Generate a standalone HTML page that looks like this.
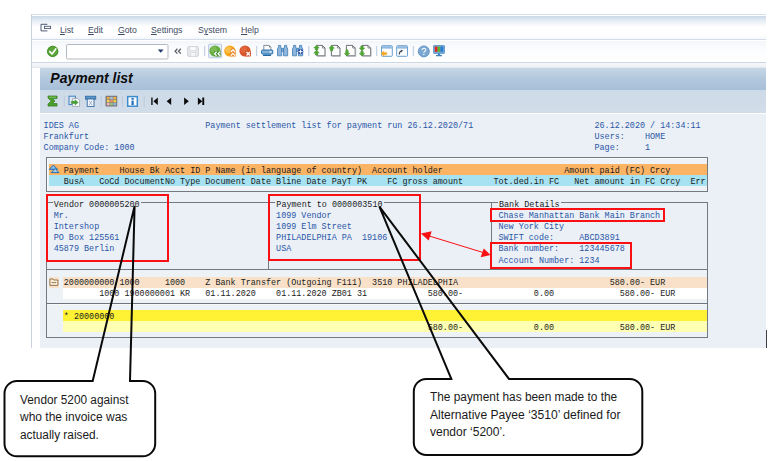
<!DOCTYPE html>
<html>
<head>
<meta charset="utf-8">
<title>Payment list</title>
<style>
html,body{margin:0;padding:0;background:#fff;}
body{width:768px;height:461px;position:relative;overflow:hidden;font-family:"Liberation Sans",sans-serif;}
.a{position:absolute;}
/* window */
#win{left:31px;top:13.5px;width:734px;height:334px;background:#fff;border-left:1px solid #c9d2de;}
#topband{left:32px;top:13.5px;width:734px;height:1.8px;background:#d6e0ec;}
#menubar{left:32px;top:16.3px;width:734px;height:23.2px;background:linear-gradient(#cbd8e8 0%,#e6edf5 20%,#ffffff 48%,#ffffff 80%,#f5f8fb 100%);border-bottom:1px solid #d3dce9;}
#toolbar{left:32px;top:40.5px;width:734px;height:21.3px;background:linear-gradient(#f3f6fa 0%,#fbfcfe 35%,#ffffff 100%);border-bottom:1px solid #cdd7e4;}
#gap{left:32px;top:62.8px;width:734px;height:5.4px;background:linear-gradient(#f6f8fb 0%,#edf1f6 70%,#dde5ee 100%);}
#titlebar{left:40px;top:68.2px;width:726px;height:21.4px;background:linear-gradient(#c6d6e6 0%,#b4c9de 45%,#a7bfd9 100%);}
#apptb{left:40px;top:89.6px;width:726px;height:23.9px;background:linear-gradient(#cddae7,#d1dde9);}
#list{left:40px;top:113.5px;width:726px;height:234px;background:#eaf0f6;}
.menu{top:24.4px;font-size:9.8px;transform:scaleX(0.888);color:#414c64;line-height:12px;white-space:pre;transform-origin:0 50%;}
.menu u{text-decoration:underline;text-underline-offset:1px;}
#title{left:50.3px;top:68.1px;font-size:14px;font-weight:bold;font-style:italic;color:#0c0c0c;line-height:20px;white-space:pre;transform-origin:0 50%;}
/* list rows */
.r{position:absolute;left:43.6px;font-family:"Liberation Mono",monospace;font-size:8.433px;letter-spacing:0.000px;line-height:11.3px;height:11.3px;white-space:pre;}
.r.t{background:#eaf0f6;padding:0 1px;}
.bx{position:absolute;border:1px solid #737980;box-sizing:border-box;}
.red{position:absolute;border:2px solid #fa0f12;box-sizing:border-box;}
.co{position:absolute;font-size:12px;line-height:17.2px;color:#1a1a1a;white-space:pre;transform-origin:0 0;}
</style>
</head>
<body>
<div id="win" class="a"></div>
<div id="topband" class="a"></div>
<div id="menubar" class="a"></div>
<div id="toolbar" class="a"></div>
<div id="gap" class="a"></div>
<div id="titlebar" class="a"></div>
<div id="apptb" class="a"></div>
<div id="list" class="a"></div>

<!-- menu -->
<svg class="a" style="left:39px;top:22px" width="14" height="12" viewBox="39 22 14 12">
  <path d="M47.4 24.3 H41 V30.9 H47.4" fill="none" stroke="#4f5a75" stroke-width="1"/>
  <rect x="44.4" y="26.3" width="6.2" height="2.3" fill="#fff" stroke="#4f5a75" stroke-width="0.9"/>
</svg>
<div class="a menu" id="m1" style="left:59.7px"><u>L</u>ist</div>
<div class="a menu" id="m2" style="left:88px"><u>E</u>dit</div>
<div class="a menu" id="m3" style="left:117.7px"><u>G</u>oto</div>
<div class="a menu" id="m4" style="left:151.4px"><u>S</u>ettings</div>
<div class="a menu" id="m5" style="left:197.5px">S<u>y</u>stem</div>
<div class="a menu" id="m6" style="left:240.5px"><u>H</u>elp</div>

<!-- standard toolbar -->
<svg class="a" style="left:32px;top:40px" width="440" height="23" viewBox="32 40 440 23">
  <!-- enter (green check) -->
  <circle cx="52.7" cy="51.4" r="5.6" fill="#5aa63a"/>
  <circle cx="52.7" cy="51.4" r="5.1" fill="none" stroke="#3f8a2a" stroke-width="0.8"/>
  <path d="M49.8 51.6 L52 54 L55.8 48.9" fill="none" stroke="#fff" stroke-width="1.6" stroke-linecap="round" stroke-linejoin="round"/>
  <!-- command field -->
  <rect x="66.5" y="44.5" width="101.5" height="14.5" rx="1.2" fill="#fff" stroke="#b4b9c0" stroke-width="1"/>
  <path d="M157.8 49.6 H163.6 L160.7 52.8Z" fill="#26396b"/>
  <!-- « -->
  <path d="M177.4 48.8 L175.1 51.2 L177.4 53.6 M180.8 48.8 L178.5 51.2 L180.8 53.6" fill="none" stroke="#585d66" stroke-width="1.25"/>
  <!-- save (disabled) -->
  <rect x="187.7" y="46.5" width="10.6" height="9.8" rx="1" fill="#e9ebee" stroke="#c9ccd1" stroke-width="0.9"/>
  <rect x="189.9" y="46.8" width="6.2" height="3.6" fill="#fbfbfc" stroke="#d0d3d7" stroke-width="0.6"/>
  <rect x="190.3" y="52.4" width="5.4" height="3.8" fill="#f6f7f8" stroke="#d0d3d7" stroke-width="0.6"/>
  <!-- separators -->
  <g stroke="#c4d3e6" stroke-width="1.3">
    <path d="M204.6 46V56 M256.6 46V56 M308.8 46V56 M376.6 46V56 M413.4 46V56"/>
  </g>
  <!-- back (green, framed) -->
  <rect x="208.6" y="44.2" width="13" height="13.6" rx="1" fill="#e6eef8" stroke="#aabedb" stroke-width="0.8"/>
  <circle cx="215" cy="51" r="5.6" fill="#66ad3e"/>
  <circle cx="213.8" cy="49.6" r="3.2" fill="#8cc765" opacity=".55"/>
  <path d="M214 51.2 H220.6 V56.4 H216 Q213.2 55.4 214 51.2Z" fill="#3f8a2c"/>
  <path d="M216.6 51.8 L214.6 53.8 L216.6 55.8 M220 51.8 L218 53.8 L220 55.8" fill="none" stroke="#fff" stroke-width="1.3"/>
  <!-- exit (orange) -->
  <circle cx="229.8" cy="51" r="5.6" fill="#f7a51e"/>
  <circle cx="228.4" cy="49.8" r="3.2" fill="#fdcc5e" opacity=".7"/>
  <path d="M230.2 50.4 L232.9 47.4 L235.7 50.4 V56.6 H230.2Z" fill="#ec8a2c"/>
  <path d="M230.8 52 L232.9 49.8 L235 52 M230.8 55.6 L232.9 53.4 L235 55.6" fill="none" stroke="#fff" stroke-width="1.25"/>
  <!-- cancel (red) -->
  <circle cx="245" cy="51" r="5.6" fill="#d9562c"/>
  <circle cx="243.8" cy="49.8" r="3.2" fill="#e9754a" opacity=".5"/>
  <rect x="245.4" y="51" width="5.6" height="5.6" rx="1" fill="#cc4d25"/>
  <path d="M246.5 52.1 L250 55.6 M250 52.1 L246.5 55.6" fill="none" stroke="#fff" stroke-width="1.4"/>
  <!-- print -->
  <path d="M263.8 50 V45.4 H269 L270.9 47.3 V50" fill="#fdfdfd" stroke="#6b7380" stroke-width="0.8"/>
  <path d="M269 45.4 V47.3 H270.9Z" fill="#59616d"/>
  <rect x="261.6" y="50" width="11.2" height="4" rx="0.8" fill="#82b2da" stroke="#1f6aa5" stroke-width="0.9"/>
  <rect x="269.6" y="51.2" width="1.8" height="1.4" fill="#fff"/>
  <rect x="263" y="54.5" width="8" height="1.5" fill="#1f6aa5"/>
  <!-- find -->
  <g fill="#8fb5da" stroke="#3c7db6" stroke-width="0.8" stroke-linejoin="round">
    <path d="M278.5 45.4 H280.70000000000005 V47 L281.70000000000005 49 V55.8 H277.5 V49 L278.5 47Z"/>
    <path d="M284.5 45.4 H286.70000000000005 V47 L287.70000000000005 49 V55.8 H283.5 V49 L284.5 47Z"/>
    <rect x="281.70000000000005" y="48.4" width="1.8" height="3"/>
  </g>
  <!-- find next -->
  <g fill="#8fb5da" stroke="#3c7db6" stroke-width="0.8" stroke-linejoin="round">
    <path d="M293.5 45.4 H295.70000000000005 V47 L296.70000000000005 49 V55.8 H292.5 V49 L293.5 47Z"/>
    <path d="M299.5 45.4 H301.70000000000005 V47 L302.70000000000005 49 V55.8 H298.5 V49 L299.5 47Z"/>
    <rect x="296.70000000000005" y="48.4" width="1.8" height="3"/>
  </g>
  <circle cx="300.6" cy="51.6" r="2.6" fill="#2b4fa2"/>
  <path d="M298.6 51.6 H302.6 M300.6 49.6 V53.6" stroke="#fff" stroke-width="1"/>
  <!-- page icons -->
  <path d="M316.8 45.4 H322.4 L325.0 48.0 V55.8 H316.8Z" fill="#fdfdfd" stroke="#5d6168" stroke-width="0.9" stroke-linejoin="round"/><path d="M322.4 45.4 V48.0 H325.0" fill="none" stroke="#5d6168" stroke-width="0.7"/><path d="M317.40000000000003 56.4 H325.5 V48.6" fill="none" stroke="#a9adb3" stroke-width="0.7"/>
  <path d="M316.5 45.2 L319.3 47.9 H317.8 V49.9 H315.2 V47.9 H313.7Z" fill="#4fa831" stroke="#3a8a26" stroke-width="0.4" stroke-linejoin="round"/>
  <path d="M316.5 50.2 L319.3 52.9 H317.8 V54.9 H315.2 V52.9 H313.7Z" fill="#4fa831" stroke="#3a8a26" stroke-width="0.4" stroke-linejoin="round"/>
  <path d="M331.4 45.4 H337.4 L340.0 48.0 V55.8 H331.4Z" fill="#fdfdfd" stroke="#5d6168" stroke-width="0.9" stroke-linejoin="round"/><path d="M337.4 45.4 V48.0 H340.0" fill="none" stroke="#5d6168" stroke-width="0.7"/><path d="M332.0 56.4 H340.5 V48.6" fill="none" stroke="#a9adb3" stroke-width="0.7"/>
  <path d="M331.7 45.5 L334.5 48.2 H333.0 V50.2 H330.4 V48.2 H328.9Z" fill="#4fa831" stroke="#3a8a26" stroke-width="0.4" stroke-linejoin="round"/><rect x="330.4" y="49" width="2.6" height="2.2" fill="#4fa831"/>
  <path d="M346.4 45.4 H352.6 L355.2 48.0 V55.8 H346.4Z" fill="#fdfdfd" stroke="#5d6168" stroke-width="0.9" stroke-linejoin="round"/><path d="M352.6 45.4 V48.0 H355.2" fill="none" stroke="#5d6168" stroke-width="0.7"/><path d="M347.0 56.4 H355.7 V48.6" fill="none" stroke="#a9adb3" stroke-width="0.7"/>
  <path d="M347.0 56.1 L349.8 53.4 H348.3 V51.4 H345.7 V53.4 H344.2Z" fill="#4fa831" stroke="#3a8a26" stroke-width="0.4" stroke-linejoin="round"/><rect x="345.7" y="49.6" width="2.6" height="2.2" fill="#4fa831"/>
  <path d="M362.0 45.4 H368.0 L370.6 48.0 V55.8 H362.0Z" fill="#fdfdfd" stroke="#5d6168" stroke-width="0.9" stroke-linejoin="round"/><path d="M368.0 45.4 V48.0 H370.6" fill="none" stroke="#5d6168" stroke-width="0.7"/><path d="M362.6 56.4 H371.1 V48.6" fill="none" stroke="#a9adb3" stroke-width="0.7"/>
  <path d="M362.0 50.8 L364.8 48.1 H363.3 V46.1 H360.7 V48.1 H359.2Z" fill="#4fa831" stroke="#3a8a26" stroke-width="0.4" stroke-linejoin="round"/>
  <path d="M362.0 56.1 L364.8 53.4 H363.3 V51.4 H360.7 V53.4 H359.2Z" fill="#4fa831" stroke="#3a8a26" stroke-width="0.4" stroke-linejoin="round"/>
  <!-- window icons -->
  <rect x="381.5" y="45.7" width="10.8" height="10.6" rx="0.8" fill="#fbfdff" stroke="#6a9fce" stroke-width="1"/>
  <rect x="382" y="46.2" width="9.8" height="2.4" fill="#8fb8de"/>
  <path d="M381 53.6 L383.6 51.2 L384 52.4 H386.8 V54.8 H384 L383.6 56Z" fill="#f7a21b" stroke="#f9b84a" stroke-width="0.6" stroke-linejoin="round"/>
  <rect x="396.7" y="45.7" width="10.8" height="10.6" rx="0.8" fill="#fbfdff" stroke="#6a9fce" stroke-width="1"/>
  <rect x="397.2" y="46.2" width="9.8" height="2.4" fill="#8fb8de"/>
  <path d="M399.3 54.4 Q399.3 51.2 401.8 51" fill="none" stroke="#3e4450" stroke-width="1.1"/>
  <path d="M400.8 49.7 L403 50.6 L401.2 52.4Z" fill="#3e4450"/>
  <!-- help -->
  <circle cx="423.8" cy="51.4" r="5.5" fill="#7ba8d1" stroke="#5c92c4" stroke-width="0.9"/>
  <path d="M421.9 50 Q422 48.3 423.9 48.3 Q425.7 48.4 425.7 49.8 Q425.7 50.8 424.6 51.4 Q423.8 51.9 423.8 52.8" fill="none" stroke="#eef4fa" stroke-width="1.15"/>
  <circle cx="423.8" cy="54.5" r="0.75" fill="#eef4fa"/>
  <!-- monitor -->
  <rect x="433.5" y="45.5" width="11" height="7.9" rx="0.6" fill="#74a9d8" stroke="#5591c8" stroke-width="0.8"/>
  <rect x="434.8" y="46.6" width="2.8" height="5.2" fill="#e3261f"/>
  <rect x="437.6" y="46.6" width="2.8" height="5.2" fill="#5bb52e"/>
  <rect x="440.4" y="46.6" width="2.8" height="5.2" fill="#2c7ad6"/>
  <path d="M437.9 53.6 H440.1 V55 H442 V56.3 H436 V55 H437.9Z" fill="#3f82c0"/>
</svg>

<div id="title" class="a">Payment list</div>

<!-- application toolbar -->
<svg class="a" style="left:40px;top:89px" width="180" height="25" viewBox="40 89 180 25">
  <!-- sigma -->
  <path d="M48 96 H57 V98.6 H52.4 L55 101 L52.4 103.5 H57 V106.1 H48 V104 L51.2 101 L48 98Z" fill="#4aa02c" stroke="#2f7a1d" stroke-width="0.7" stroke-linejoin="round"/>
  <path d="M49.2 97.2 H55.8" stroke="#8fd070" stroke-width="0.8"/>
  <g stroke="#bccbdc" stroke-width="1"><path d="M64.3 96V107 M101.2 96V107 M122.5 96V107 M144.2 96V107"/></g>
  <!-- icon 2 -->
  <rect x="69" y="96.2" width="6.4" height="8.4" fill="#dfeaf6" stroke="#3f7fbb" stroke-width="1"/>
  <path d="M72.6 98.4 H77.4 L79.6 100.6 V106.4 H72.6Z" fill="#fdfdfd" stroke="#8b949f" stroke-width="0.7"/>
  <path d="M71.4 101.3 H75 V99.7 L78.2 102.4 L75 105.1 V103.5 H71.4Z" fill="#44a236" stroke="#2f7d24" stroke-width="0.4"/>
  <!-- icon 3 -->
  <rect x="85.4" y="96.2" width="10.4" height="3" fill="#5c97cc" stroke="#2f68a0" stroke-width="0.8"/>
  <rect x="87.2" y="99" width="6.8" height="7.4" fill="#f4f8fc" stroke="#2f68a0" stroke-width="0.9"/>
  <path d="M89.2 100.8 L92 105 M92 100.8 L89.2 105" stroke="#8ea1bd" stroke-width="0.8"/>
  <!-- grid -->
  <rect x="105.9" y="96.1" width="11" height="10" fill="#878380" stroke="#6d6a68" stroke-width="0.6"/>
  <g>
    <rect x="106.9" y="97" width="2.6" height="2.3" fill="#f5ab3e"/><rect x="110.2" y="97" width="2.6" height="2.3" fill="#a9c3e6"/><rect x="113.5" y="97" width="2.6" height="2.3" fill="#f7b53c"/>
    <rect x="106.9" y="100" width="2.6" height="2.3" fill="#f7d64e"/><rect x="110.2" y="100" width="2.6" height="2.3" fill="#ee8a6a"/><rect x="113.5" y="100" width="2.6" height="2.3" fill="#f3cf3d"/>
    <rect x="106.9" y="103" width="2.6" height="2.3" fill="#f2b4c2"/><rect x="110.2" y="103" width="2.6" height="2.3" fill="#94cc74"/><rect x="113.5" y="103" width="2.6" height="2.3" fill="#88b4ea"/>
  </g>
  <!-- info -->
  <rect x="127.7" y="96.6" width="9.6" height="9.6" fill="#fdfeff" stroke="#3c8dd0" stroke-width="1.5"/>
  <rect x="131.5" y="100.6" width="2.2" height="4.4" fill="#1f6dbd"/>
  <rect x="131.5" y="98" width="2.2" height="1.8" fill="#1f6dbd"/>
  <!-- nav arrows -->
  <g fill="#0b0b0b">
    <rect x="151" y="97.5" width="1.8" height="7.5" fill="#3c3f44"/>
    <path d="M157.8 97.5 V105 L153.4 101.25Z"/>
    <path d="M171.2 97.7 V104.9 L166.6 101.3Z"/>
    <path d="M184.1 97.5 V105 L188.8 101.25Z"/>
    <path d="M197.9 97.5 V105 L202.3 101.25Z"/>
    <rect x="202.3" y="97.5" width="1.9" height="7.5"/>
  </g>
</svg>

<!-- list content -->
<!-- header box -->
<div class="bx" style="left:45.9px;top:157.2px;width:662.2px;height:34.4px;background:#eef2f7;border-bottom-width:1.4px;box-shadow:inset 1px 1px 0 #fbfcfe;"></div>
<div class="a" style="left:48.7px;top:164.1px;width:658px;height:10.9px;background:#fbb364;"></div>
<div class="a" style="left:48.7px;top:175px;width:658px;height:11.1px;background:#a6e2f2;"></div>
<svg class="a" style="left:44px;top:160px" width="24" height="18" viewBox="44 160 24 18">
  <path d="M53.4 165.1 L57.5 169.3 H49.4Z" fill="#8fbce6" stroke="#1d6cb3" stroke-width="1" stroke-linejoin="round"/>
  <path d="M55.2 168.5 L58.9 172.6 H51.2Z" fill="#a9cdee" stroke="#1d6cb3" stroke-width="1" stroke-linejoin="round"/>
</svg>

<!-- frames -->
<div class="bx" style="left:45.9px;top:201.7px;width:223px;height:68px;border-bottom:none;border-right:none"></div>
<div class="bx" style="left:268px;top:201.7px;width:224px;height:68px;border-bottom:none;border-right:none"></div>
<div class="bx" style="left:490.6px;top:201.7px;width:217.5px;height:68px;border-bottom:none"></div>
<!-- body box -->
<div class="bx" style="left:45.9px;top:268.9px;width:662.2px;height:69px;border-bottom-width:1.4px;background:#edf2f7;"></div>
<div class="a" style="left:45.9px;top:302.9px;width:662.2px;height:1px;background:#6f757d;"></div>
<div class="a" style="left:46.9px;top:303.9px;width:660.2px;height:1px;background:#f6f8fb;"></div>
<div class="a" style="left:48.8px;top:277.1px;width:10.1px;height:10.6px;background:#f8e1c8;"></div>
<div class="a" style="left:63.1px;top:277.1px;width:643.6px;height:10.7px;background:#f8e1c8;"></div>
<div class="a" style="left:63.1px;top:287.8px;width:643.6px;height:11px;background:#ffffff;"></div>
<div class="a" style="left:63.1px;top:310.2px;width:643.6px;height:10.8px;background:#fff234;"></div>
<div class="a" style="left:63.1px;top:321px;width:643.6px;height:11.4px;background:#ffffb4;"></div>
<svg class="a" style="left:49px;top:277px" width="10" height="10" viewBox="0 0 10 10">
  <path d="M0.9 2 H3.8 L4.6 3 H8.9 V8.4 H0.9Z" fill="#fbeeda" stroke="#7a5a30" stroke-width="0.8"/>
  <path d="M2.6 5.6 H7.2" stroke="#7a5a30" stroke-width="0.8"/>
</svg>

<div class="r" style="top:121.35px;color:#2b56a6">IDES AG                         Payment settlement list for payment run 26.12.2020/71                        26.12.2020 / 14:34:11</div>
<div class="r" style="top:132.35px;color:#2b56a6">Frankfurt                                                                                                    Users:    HOME</div>
<div class="r" style="top:143.35px;color:#2b56a6">Company Code: 1000                                                                                           Page:     1</div>
<div class="r" style="top:166.35px;color:#1c1c1c">    Payment    House Bk Acct ID P Name (in language of country)  Account holder                        Amount paid (FC) Crcy</div>
<div class="r" style="top:177.35px;color:#1c1c1c">    BusA   CoCd DocumentNo Type Document Date Bline Date PayT PK    FC gross amount      Tot.ded.in FC   Net amount in FC Crcy  Err</div>
<div class="r" style="top:211.35px;color:#2b56a6">  Mr.                                         1099 Vendor                                 Chase Manhattan Bank Main Branch</div>
<div class="r" style="top:222.35px;color:#2b56a6">  Intershop                                   1099 Elm Street                             New York City</div>
<div class="r" style="top:233.35px;color:#2b56a6">  PO Box 125561                               PHILADELPHIA PA  19106                      SWIFT code:     ABCD3891</div>
<div class="r" style="top:244.35px;color:#2b56a6">  45879 Berlin                                USA                                         Bank number:    123445678</div>
<div class="r" style="top:256.35px;color:#2b56a6">                                                                                          Account Number: 1234</div>
<div class="r" style="top:278.35px;color:#1c1c1c">    2000000000 1000     1000    Z Bank Transfer (Outgoing F111)  3510 PHILADELPHIA                              580.00- EUR</div>
<div class="r" style="top:289.35px;color:#1c1c1c">           1000 1900000001 KR   01.11.2020    01.11.2020 ZB01 31            580.00-              0.00             580.00- EUR</div>
<div class="r" style="top:312.35px;color:#1c1c1c">    * 20000000</div>
<div class="r" style="top:323.35px;color:#1c1c1c">                                                                            580.00-              0.00             580.00- EUR</div>
<div class="r t" style="top:200.35px;left:52.72px;color:#1c1c1c">Vendor 0000005200</div>
<div class="r t" style="top:200.35px;left:275.36px;color:#1c1c1c">Payment to 0000003510</div>
<div class="r t" style="top:200.35px;left:498.00px;color:#1c1c1c">Bank Details</div>

<!-- caret at right -->
<div class="a" style="left:765.8px;top:330.2px;width:1.4px;height:18px;background:#3c3f45;"></div>

<!-- annotations -->
<div class="red" style="left:45.7px;top:194.2px;width:123.6px;height:67.7px;"></div>
<div class="red" style="left:268.2px;top:194.2px;width:153.2px;height:66.6px;"></div>
<div class="red" style="left:490.3px;top:208.4px;width:174.5px;height:13.6px;"></div>
<div class="red" style="left:490.3px;top:242.4px;width:141.8px;height:27px;"></div>

<svg class="a" style="left:0;top:0" width="768" height="461" viewBox="0 0 768 461">
  <!-- red double arrow -->
  <path d="M426 235.0 L486 253.4" stroke="#fa0f12" stroke-width="1" fill="none"/>
  <path d="M420.9 233.4 L431.7 231.3 L428.7 240.5Z" fill="#fa0f12"/>
  <path d="M490.6 254.9 L480.7 257.2 L483.7 248.4Z" fill="#fa0f12"/>
  <!-- callout 1 -->
  <path d="M92.7 380.95 L134.6 206 L130 380.95 H142.7 A12.5 12.5 0 0 1 155.2 393.45 V443.75 A12.5 12.5 0 0 1 142.7 456.25 H17 A12.5 12.5 0 0 1 4.5 443.75 V393.45 A12.5 12.5 0 0 1 17 380.95 Z" fill="none" stroke="#0a0a0a" stroke-width="2" stroke-linejoin="miter" stroke-miterlimit="4"/>
  <!-- callout 2 -->
  <path d="M451.3 378.95 L379.4 206.6 L509 378.95 H629.8 A12.5 12.5 0 0 1 642.3 391.45 V442.4 A12.5 12.5 0 0 1 629.8 454.9 H426.3 A12.5 12.5 0 0 1 413.8 442.4 V391.45 A12.5 12.5 0 0 1 426.3 378.95 Z" fill="none" stroke="#0a0a0a" stroke-width="2" stroke-linejoin="miter" stroke-miterlimit="4"/>
</svg>
<div class="co" style="left:20.4px;top:392.10px;transform:scaleX(0.9855)">Vendor 5200 against</div>
<div class="co" style="left:20.4px;top:409.30px;transform:scaleX(0.9991)">who the invoice was</div>
<div class="co" style="left:20.4px;top:426.50px;transform:scaleX(0.9853)">actually raised.</div>
<div class="co" style="left:429.8px;top:389.00px;transform:scaleX(0.9879)">The payment has been made to the</div>
<div class="co" style="left:429.8px;top:406.50px;transform:scaleX(1.0078)">Alternative Payee ‘3510’ defined for</div>
<div class="co" style="left:429.8px;top:423.80px;transform:scaleX(1.0010)">vendor ‘5200’.</div>
</body>
</html>
